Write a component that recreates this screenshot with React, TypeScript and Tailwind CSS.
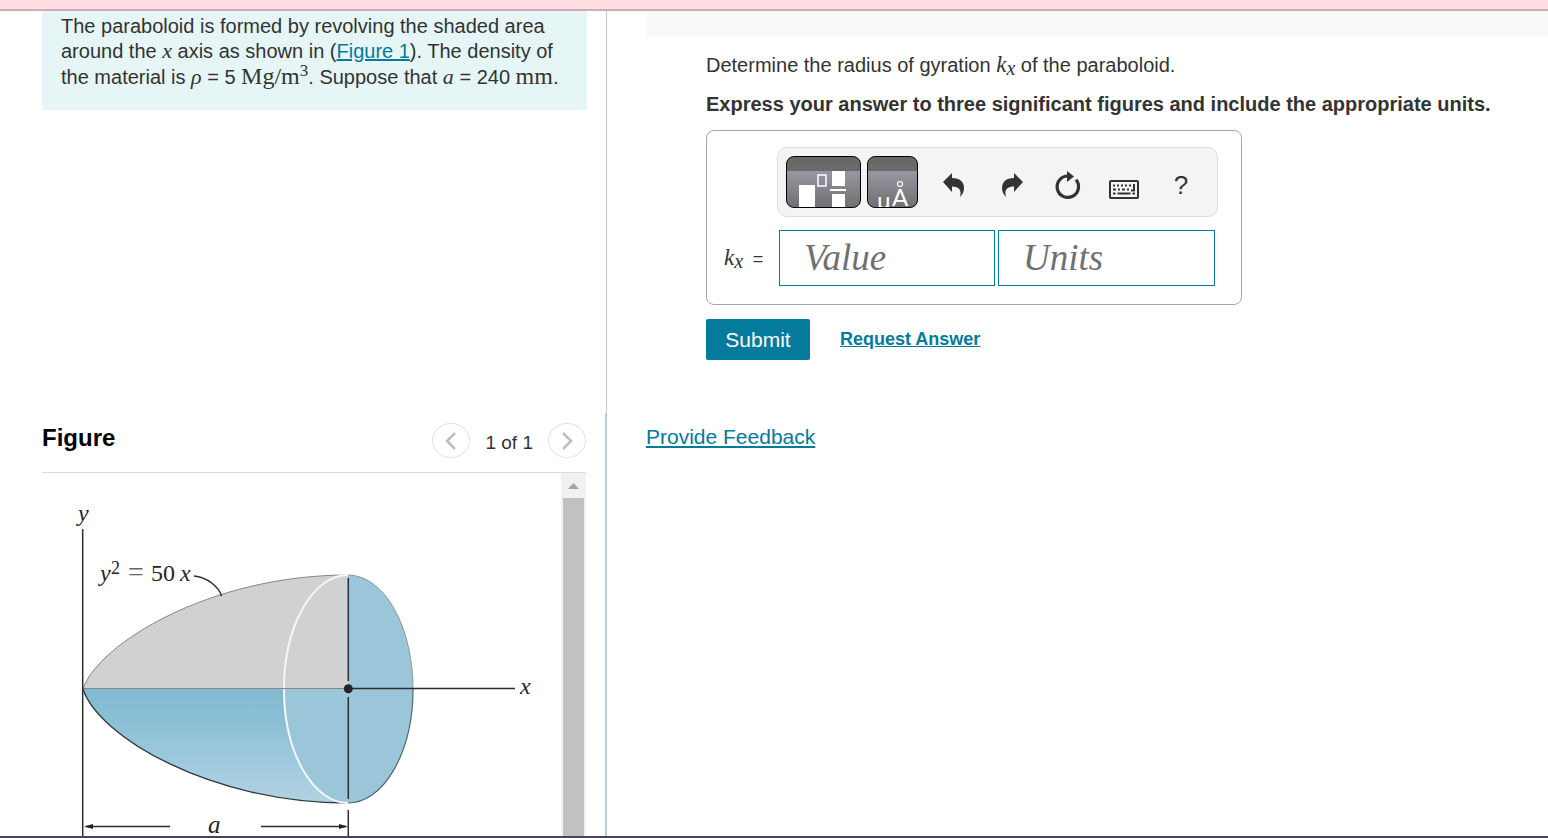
import type { ReactNode } from "react";

const MathVar = ({ children }: { children: ReactNode }) => (
  <span className="font-['Liberation_Serif',serif] text-[22px] italic leading-none">{children}</span>
);

const MathUnit = ({ children }: { children: ReactNode }) => (
  <span className="font-['Liberation_Serif',serif] text-[24px] leading-none">{children}</span>
);

const KSubX = () => (
  <span className="font-['Liberation_Serif',serif] text-[23px] italic leading-none">
    k<sub className="bottom-[-3px] text-[20px] leading-none">x</sub>
  </span>
);

const ProblemStatement = () => (
  <section className="ml-[42px] mr-[19px] h-[99px] bg-[#e6f6f6] pl-[19px] pt-[3px] text-[20px] leading-[25px]">
    <p className="whitespace-nowrap">
      The paraboloid is formed by revolving the shaded area
      <br />
      around the <MathVar>x</MathVar> axis as shown in (
      <a href="#figure" className="text-[#047a9c] underline">Figure 1</a>). The density of
      <br />
      the material is <MathVar>ρ</MathVar> = 5{" "}
      <MathUnit>
        Mg/m<sup className="text-[17px] leading-none">3</sup>
      </MathUnit>
      . Suppose that <MathVar>a</MathVar> = 240 <MathUnit>mm</MathUnit>.
    </p>
  </section>
);

const ParaboloidFigure = () => (
  <svg viewBox="42 473 519 363" className="h-[363px] w-[519px] shrink-0" role="img" aria-label="Paraboloid of revolution">
    <defs>
      <linearGradient id="body" x1="0" y1="0" x2="0" y2="1">
        <stop offset="0" stopColor="#82bad1" />
        <stop offset="0.3" stopColor="#8cc0d5" />
        <stop offset="1" stopColor="#b2d3e4" />
      </linearGradient>
    </defs>
    <path d="M83 689C98 736 210 803 348 803V689Z" fill="url(#body)" />
    <ellipse cx="348" cy="689" rx="65" ry="114" fill="#9bc6da" />
    <path d="M83 689C98 644 210 575 348 575V689Z" fill="#d1d1d3" />
    <path d="M83 689C98 644 210 575 348 575" fill="none" stroke="#858587" />
    <path d="M83 689C98 736 210 803 348 803" fill="none" stroke="#30383e" strokeWidth="1.3" />
    <path d="M348 575A65 114 0 0 1 413 689" fill="none" stroke="#87999f" />
    <path d="M413 689A65 114 0 0 1 348 803" fill="none" stroke="#4f6871" strokeWidth="1.2" />
    <path d="M348 575A64 114 0 0 0 348 803" fill="none" stroke="#f4f7f8" strokeWidth="2" />
    <path d="M83 688.500H348" stroke="#86898c" />
    <g fill="none" stroke="#2d2b2d" strokeWidth="1.500">
      <path d="M82.700 529V836M348.300 578V681M348.300 697V799M348.300 810V836M348 688.500H515" />
      <path d="M194 576C207 577 219 587 221.500 596" />
      <path d="M86 826.500H170M261 826.500H346" />
    </g>
    <circle cx="348.300" cy="688.800" r="4.500" fill="#252326" />
    <path d="M84 826.500L93 824V829ZM348 826.500L339 824V829Z" fill="#252326" />
    <g fill="#252529" className="font-['Liberation_Serif',serif]" fontSize="24">
      <text x="78" y="521" fontStyle="italic">y</text>
      <text x="100" y="581" fontStyle="italic">y</text>
      <text x="111" y="574" fontSize="18">2</text>
      <text x="128" y="581" fontSize="28" fill="#66666a">=</text>
      <text x="151" y="581">50</text>
      <text x="180" y="581" fontStyle="italic">x</text>
      <text x="520" y="694" fontStyle="italic">x</text>
      <text x="208" y="833" fontSize="25" fontStyle="italic">a</text>
    </g>
  </svg>
);

const PagerButton = ({ label, path }: { label: string; path: string }) => (
  <button aria-label={label} className="flex h-[35px] w-[38px] items-center justify-center rounded-[50%] border border-[#e3e3e3]">
    <svg viewBox="0 0 12 18" className="h-[18px] w-3" fill="none" stroke="#bdbdbd" strokeWidth="2.500">
      <path d={path} />
    </svg>
  </button>
);

const FigurePanel = () => (
  <section id="figure" className="flex flex-1 flex-col border-r-2 border-[#b8cce0] pl-[42px] pr-[19px]">
    <div className="flex h-[60px] items-center justify-between border-b border-[#dcdcdc] pb-1">
      <h2 className="pb-1.5 text-[24px] font-bold leading-7 text-black">Figure</h2>
      <div className="flex items-center gap-[15px]">
        <PagerButton label="Previous figure" path="M10 1L2 9L10 17" />
        <span className="pt-1.5 text-[19px]">1 of 1</span>
        <PagerButton label="Next figure" path="M2 1L10 9L2 17" />
      </div>
    </div>
    <div className="flex flex-1 justify-between">
      <ParaboloidFigure />
      <div className="flex w-[25px] flex-col bg-[#f1f1f1] pl-0.5 pr-0.5">
        <svg viewBox="0 0 21 25" className="h-[25px] w-[21px]" fill="#a3a3a3">
          <path d="M5 16L10.500 10L16 16Z" />
        </svg>
        <div className="flex-1 bg-[#c1c1c1]" />
      </div>
    </div>
  </section>
);

const templateButton =
  "h-[52px] overflow-hidden rounded-lg border border-black bg-[linear-gradient(#666_0,#6b6b6b_14px,#9896a0_14px,#6e6e70_52px)]";

const Toolbar = () => (
  <div className="ml-[70px] mr-[23px] flex h-[70px] items-start rounded-[10px] border border-[#dddddd] bg-[#f4f4f4] pl-2 pt-2">
    <button aria-label="Templates" className={`${templateButton} w-[75px]`}>
      <svg viewBox="0 0 73 50" className="h-[50px] w-[73px]">
        <path d="M12 28H28V50H12ZM45 14H58V29H45ZM45 37H58V50H45ZM43 32H59V34H43Z" fill="#fff" />
        <path d="M31 18H39V29H31Z" fill="none" stroke="#fff" strokeWidth="1.500" />
      </svg>
    </button>
    <button aria-label="Symbols" className={`${templateButton} ml-1.5 w-[51px]`}>
      <svg viewBox="0 0 49 50" className="h-[50px] w-[49px] font-[Lato,sans-serif]" fill="#fff">
        <text x="9" y="52" fontSize="24">μ</text>
        <text x="24" y="49" fontSize="24">A</text>
        <circle cx="32" cy="27" r="2.500" fill="none" stroke="#fff" strokeWidth="1.200" />
      </svg>
    </button>
    <button aria-label="Undo" className="ml-[25px] mt-4 h-7 w-[22px]">
      <svg viewBox="0 0 22 28" className="h-7 w-[22px]" fill="#333">
        <path d="M0 10L9 1V6C17 6 21 10 21 16C21 19 20 22 17 25C19 18 16 14.500 9 14.500V20Z" />
      </svg>
    </button>
    <button aria-label="Redo" className="ml-9 mt-4 h-7 w-[22px]">
      <svg viewBox="0 0 22 28" className="h-7 w-[22px]" fill="#333">
        <path d="M22 10L13 1V6C5 6 1 10 1 16C1 19 2 22 5 25C3 18 6 14.500 13 14.500V20Z" />
      </svg>
    </button>
    <button aria-label="Reset" className="ml-8 mt-4 h-7 w-[26px]">
      <svg viewBox="0 0 26 28" className="h-7 w-[26px] overflow-visible">
        <path d="M13 4A10.700 10.700 0 1 0 21 7.800" fill="none" stroke="#333" strokeWidth="3.200" />
        <path d="M12 -1L19 4.500L12 10Z" fill="#333" />
      </svg>
    </button>
    <button aria-label="Keyboard shortcuts" className="ml-7 mt-6 h-[19px] w-[30px]">
      <svg viewBox="0 0 30 19" className="h-[19px] w-[30px]" fill="none" stroke="#333">
        <rect x="1" y="1" width="28" height="17" rx="1" strokeWidth="2" />
        <path d="M4 5.500H24" strokeWidth="2" strokeDasharray="2 2" />
        <path d="M4 9.500H22" strokeWidth="2" strokeDasharray="3 2 2 2" />
        <path d="M4 13.500H6.500M8.500 13.500H21.500M23.500 13.500H26M25 4V10.500H22" strokeWidth="2" />
      </svg>
    </button>
    <button aria-label="Help" className="ml-8 mt-[11px] w-5 text-[26px] leading-9 text-[#333]">?</button>
  </div>
);

const AnswerBox = () => (
  <div className="mt-[13px] w-[536px] rounded-lg border border-[#a6a6a6] pb-[18px] pt-4">
    <Toolbar />
    <div className="mt-[13px] flex items-center pl-[17px]">
      <label htmlFor="value" className="w-[55px] shrink-0 whitespace-nowrap text-[20px] leading-6">
        <KSubX /> <span className="pl-1 text-[18px]">=</span>
      </label>
      <input
        id="value"
        placeholder="Value"
        className="h-14 w-[216px] border border-[#047a9c] pb-0.5 pl-6 font-['Liberation_Serif',serif] text-[37px] italic outline-none placeholder:text-[#707070]"
      />
      <input
        aria-label="Units"
        placeholder="Units"
        className="ml-[3px] h-14 w-[217px] border border-[#047a9c] pb-0.5 pl-6 font-['Liberation_Serif',serif] text-[37px] italic outline-none placeholder:text-[#707070]"
      />
    </div>
  </div>
);

const AnswerPanel = () => (
  <main className="pl-[39px]">
    <div className="h-[26px] bg-[#f9f9f9]" />
    <div className="pl-[60px]">
      <p className="mt-[15px] text-[20px] leading-[26px]">
        Determine the radius of gyration <KSubX /> of the paraboloid.
      </p>
      <p className="mt-[13px] text-[20px] font-bold leading-[26px]">
        Express your answer to three significant figures and include the appropriate units.
      </p>
      <AnswerBox />
      <div className="mt-[14px] flex items-center gap-[30px]">
        <button className="h-[41px] w-[104px] rounded-[2px] bg-[#047a9c] text-[21px] text-white">Submit</button>
        <a href="#answer" className="text-[18px] font-bold text-[#047a9c] underline">Request Answer</a>
      </div>
    </div>
    <a href="#feedback" className="mt-16 inline-block text-[21px] leading-[26px] text-[#047a9c] underline">
      Provide Feedback
    </a>
  </main>
);

const App = () => {
  return (
    <div className="flex min-h-screen flex-col border-b-2 border-[#454354] bg-white font-['Liberation_Sans',Arial,sans-serif] text-[#333]">
      <header className="h-[11px] border-b-2 border-[#cfabb4] bg-[#ffdfe4]" />
      <div className="grid flex-1 grid-cols-[607fr_941fr]">
        <div className="flex flex-col">
          <div className="h-[402px] border-r border-[#b8cce0]">
            <ProblemStatement />
          </div>
          <FigurePanel />
        </div>
        <AnswerPanel />
      </div>
    </div>
  );
};

export default App;
